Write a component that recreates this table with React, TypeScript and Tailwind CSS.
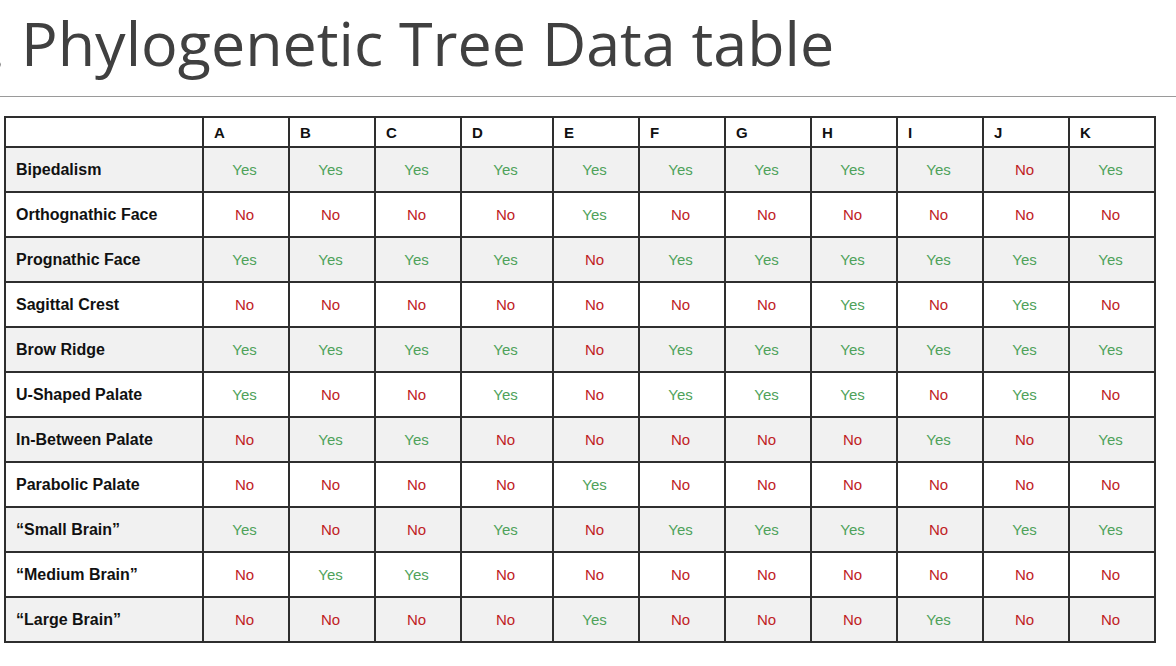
import React from "react";

const cols = ["A", "B", "C", "D", "E", "F", "G", "H", "I", "J", "K"];

// Y = yes, N = no, per column A..K
const rows: [string, string][] = [
  ["Bipedalism", "YYYYYYYYYNY"],
  ["Orthognathic Face", "NNNNYNNNNNN"],
  ["Prognathic Face", "YYYYNYYYYYY"],
  ["Sagittal Crest", "NNNNNNNYNYN"],
  ["Brow Ridge", "YYYYNYYYYYY"],
  ["U-Shaped Palate", "YNNYNYYYNYN"],
  ["In-Between Palate", "NYYNNNNNYNY"],
  ["Parabolic Palate", "NNNNYNNNNNN"],
  ["\u201cSmall Brain\u201d", "YNNYNYYYNYY"],
  ["\u201cMedium Brain\u201d", "NYYNNNNNNNN"],
  ["\u201cLarge Brain\u201d", "NNNNYNNNYNN"],
];

const colWidths = [198, 86, 86, 86, 92, 86, 86, 86, 86, 86, 86, 86];

export default function App() {
  return (
    <div className="w-[1176px] h-[666px] bg-white overflow-hidden relative font-['Liberation_Sans',Arial,sans-serif]">
      <div className="h-[97px] border-b border-[#9a9a9a] flex items-start">
        <h1 className="ml-[21px] mt-[1px] text-[61px] leading-[84px] text-[#404040] font-['Open_Sans',sans-serif]">
          Phylogenetic Tree Data table
        </h1>
      </div>
      {/* tail of the slide number, cut off at the left edge */}
      <span className="absolute left-[-11px] top-[3px] text-[61px] leading-[84px] text-[#404040] font-['Open_Sans',sans-serif]">
        .
      </span>

      <table className="mt-[19px] ml-[4px] border-collapse table-fixed text-[#111]">
        <colgroup>
          {colWidths.map((w, i) => (
            <col key={i} style={{ width: w }} />
          ))}
        </colgroup>
        <thead>
          <tr className="h-[30px] bg-white">
            <th className="border-2 border-[#2e2e2e]"></th>
            {cols.map((c) => (
              <th
                key={c}
                className="border-2 border-[#2e2e2e] text-left pl-[10px] pt-[3px] text-[15px] font-bold"
              >
                {c}
              </th>
            ))}
          </tr>
        </thead>
        <tbody>
          {rows.map(([label, vals], i) => (
            <tr
              key={label}
              className={i % 2 === 0 ? "h-[45px] bg-[#f1f1f1]" : "h-[45px] bg-white"}
            >
              <td className="border-2 border-[#2e2e2e] pl-[10px] pt-[1px] text-[16px] font-bold">
                {label}
              </td>
              {vals.split("").map((v, j) => (
                <td
                  key={j}
                  className={
                    v === "Y"
                      ? "border-2 border-[#2e2e2e] text-center pr-[3px] pt-[1px] text-[15px] text-[#4ea25a]"
                      : "border-2 border-[#2e2e2e] text-center pr-[3px] pt-[1px] text-[15px] text-[#c0211f]"
                  }
                >
                  {v === "Y" ? "Yes" : "No"}
                </td>
              ))}
            </tr>
          ))}
        </tbody>
      </table>
    </div>
  );
}
